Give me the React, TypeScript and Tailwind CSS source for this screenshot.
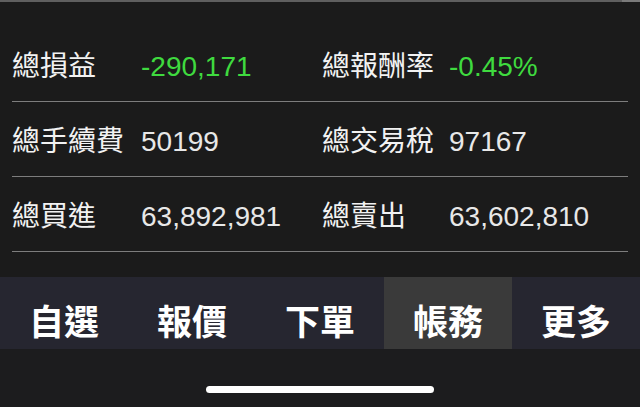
const rows = [
  { l1: "總損益", v1: "-290,171", l2: "總報酬率", v2: "-0.45%", green: true },
  { l1: "總手續費", v1: "50199", l2: "總交易稅", v2: "97167", green: false },
  { l1: "總買進", v1: "63,892,981", l2: "總賣出", v2: "63,602,810", green: false },
];

const tabs = ["自選", "報價", "下單", "帳務", "更多"];

export default function App() {
  return (
    <div
      className="w-[640px] h-[407px] bg-[#1b1b1b] flex flex-col overflow-hidden"
      style={{ fontFamily: '"Liberation Sans", "Noto Sans CJK TC", sans-serif' }}
    >
      <div className="h-[2px] bg-[#5f5f5f] flex justify-end">
        <div className="w-[18px] h-[2px] bg-[#7a7a7a]" />
      </div>
      <div className="h-[25px]" />
      <div className="px-3">
        {rows.map((r) => (
          <div key={r.l1} className="h-[75px] flex items-center border-b border-[#7d7d7d] pt-[5px]">
            <div className="w-[129px] text-[28px] text-[#f2f2f2] leading-none">{r.l1}</div>
            <div
              className={
                "w-[181px] text-[28px] leading-none " + (r.green ? "text-[#3fda3f]" : "text-[#e8e8e8]")
              }
            >
              {r.v1}
            </div>
            <div className="w-[127px] text-[28px] text-[#f2f2f2] leading-none">{r.l2}</div>
            <div className={"text-[28px] leading-none " + (r.green ? "text-[#3fda3f]" : "text-[#e8e8e8]")}>
              {r.v2}
            </div>
          </div>
        ))}
      </div>
      <div className="h-[25px]" />
      <div className="h-[72px] bg-[#262630] flex">
        {tabs.map((t) => (
          <div
            key={t}
            className={
              "w-[128px] flex items-center justify-center pt-[18px] text-[35px] font-semibold text-white leading-none " +
              (t === "帳務" ? "bg-[#3a3a3a]" : "")
            }
          >
            {t}
          </div>
        ))}
      </div>
      <div className="flex-1 bg-[#1c1c1e] flex justify-center pt-[37px]">
        <div className="w-[228px] h-[7px] rounded-full bg-white" />
      </div>
    </div>
  );
}
